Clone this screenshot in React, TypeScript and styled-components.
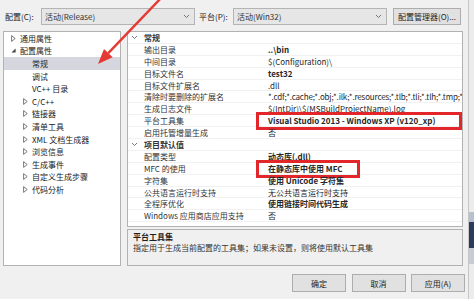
import React from "react";
import styled, { createGlobalStyle } from "styled-components";

const GlobalStyle = createGlobalStyle`
  html, body {
    margin: 0;
    padding: 0;
    background: #f0f0f0;
  }
  body {
    font-family: "Noto Sans CJK SC", "Noto Sans", sans-serif;
    font-size: 8px;
    color: #1e1e1e;
  }
`;

const Screen = styled.div`
  position: relative;
  width: 474px;
  height: 299px;
  display: flex;
  overflow: hidden;
  background: #f0f0f0;
`;

const Dialog = styled.div`
  width: 468px;
  border-right: 1px solid #c6c6c6;
  display: flex;
  flex-direction: column;
`;

const Backdrop = styled.div`
  flex: 1;
  display: flex;
  flex-direction: column;
  background: #ececec;
`;

const BackdropBand = styled.div<{ $h: number; $c: string }>`
  height: ${(p) => p.$h}px;
  background: ${(p) => p.$c};
`;

const TopBar = styled.div`
  height: 31px;
  box-sizing: border-box;
  padding: 8px 0 0 5px;
  display: flex;
  align-items: flex-start;
`;

const FieldLabel = styled.span<{ $w: number; $ml?: number }>`
  width: ${(p) => p.$w}px;
  margin-left: ${(p) => p.$ml || 0}px;
  line-height: 17px;
  white-space: nowrap;
  color: #222;
`;

const Combo = styled.div`
  width: 154px;
  height: 17px;
  box-sizing: border-box;
  border: 1px solid #b4b4b4;
  background: #e6e6e6;
  display: flex;
  align-items: center;
  justify-content: space-between;
  padding: 0 4px 0 3px;
  color: #333;
`;

const Button = styled.div<{ $w: number }>`
  width: ${(p) => p.$w}px;
  height: 17px;
  box-sizing: border-box;
  border: 1px solid #adadad;
  background: #e1e1e1;
  display: flex;
  align-items: center;
  justify-content: center;
  color: #222;
  white-space: nowrap;
`;

const ManagerButton = styled(Button)`
  margin-left: 6px;
`;

const Body = styled.div`
  height: 235px;
  display: flex;
  gap: 6px;
  padding-left: 3px;
`;

const Tree = styled.div`
  width: 118px;
  box-sizing: border-box;
  border: 1px solid #b2b2b2;
  background: #fff;
`;

const TreeRow = styled.div<{ $level: number; $selected?: boolean }>`
  height: 12.6px;
  display: flex;
  align-items: center;
  padding-left: ${(p) => p.$level * 12}px;
  background: ${(p) => (p.$selected ? "#d6d7de" : "transparent")};
  white-space: nowrap;
  color: #222;
`;

const Toggle = styled.span`
  width: 16px;
  height: 12px;
  display: flex;
  align-items: center;
  padding-left: 7px;
  box-sizing: border-box;
`;

const RightColumn = styled.div`
  width: 336px;
  display: flex;
  flex-direction: column;
  gap: 2px;
`;

const Grid = styled.div`
  height: 196px;
  box-sizing: border-box;
  border: 1px solid #b2b2b2;
  background: #fff;
  overflow: hidden;
`;

const GridRow = styled.div`
  height: 11.9px;
  display: grid;
  grid-template-columns: 12px 116px 1fr;
  box-sizing: border-box;
  border-bottom: 1px solid #f1f1f1;
  white-space: nowrap;
`;

const Margin = styled.span`
  display: flex;
  align-items: center;
  justify-content: center;
`;

const Cell = styled.span<{ $bold?: boolean }>`
  position: relative;
  line-height: 11px;
  font-weight: ${(p) => (p.$bold ? 700 : 400)};
  overflow: hidden;
  color: #1e1e1e;
`;

const NameCell = styled(Cell)`
  padding-left: 4px;
  color: #333;
`;

const ValueCell = styled(Cell)`
  padding-left: 12px;
  overflow: visible;
`;

const ValueText = styled.span<{ $tight?: boolean }>`
  display: block;
  letter-spacing: ${(p) => (p.$tight ? "-0.16px" : "0")};
  color: #262626;
`;

const Highlight = styled.span<{ $w: number }>`
  position: absolute;
  left: 0;
  top: -3px;
  width: ${(p) => p.$w}px;
  height: 18px;
  box-sizing: border-box;
  border: 3px solid #e3262a;
`;

const Description = styled.div`
  height: 37px;
  box-sizing: border-box;
  border: 1px solid #b2b2b2;
  background: #f0f0f0;
  padding: 1px 5px;
  line-height: 11px;
`;

const DescTitle = styled.div`
  font-weight: 700;
  color: #1e1e1e;
`;

const DescText = styled.div`
  color: #333;
`;

const Footer = styled.div`
  flex: 1;
  display: flex;
  justify-content: flex-end;
  align-items: flex-start;
  gap: 5.5px;
  padding: 8px 3px 0 0;
`;

const FooterButton = styled(Button)`
  height: 18px;
`;

const Arrow = styled.svg`
  position: absolute;
  left: 0;
  top: 0;
  pointer-events: none;
`;

const ComboChevron = () => (
  <svg width="7" height="5" viewBox="0 0 7 5">
    <polyline points="1,1 3.5,3.5 6,1" fill="none" stroke="#666" strokeWidth="0.9" />
  </svg>
);

const Collapsed = () => (
  <svg width="5" height="7" viewBox="0 0 5 7">
    <polygon points="0.6,0.6 4.2,3.5 0.6,6.4" fill="#fff" stroke="#6b6b6b" strokeWidth="0.9" />
  </svg>
);

const Expanded = () => (
  <svg width="5" height="5" viewBox="0 0 5 5">
    <polygon points="4.6,0.4 4.6,4.6 0.4,4.6" fill="#444" />
  </svg>
);

type TreeItem = { label: string; level: number; toggle?: "open" | "closed"; selected?: boolean };

const treeItems: TreeItem[] = [
  { label: "通用属性", level: 0, toggle: "closed" },
  { label: "配置属性", level: 0, toggle: "open" },
  { label: "常规", level: 1, selected: true },
  { label: "调试", level: 1 },
  { label: "VC++ 目录", level: 1 },
  { label: "C/C++", level: 1, toggle: "closed" },
  { label: "链接器", level: 1, toggle: "closed" },
  { label: "清单工具", level: 1, toggle: "closed" },
  { label: "XML 文档生成器", level: 1, toggle: "closed" },
  { label: "浏览信息", level: 1, toggle: "closed" },
  { label: "生成事件", level: 1, toggle: "closed" },
  { label: "自定义生成步骤", level: 1, toggle: "closed" },
  { label: "代码分析", level: 1, toggle: "closed" },
];

type Prop = { name: string; value: string; bold?: boolean; mark?: number; tight?: boolean };
type Section = { title: string; rows: Prop[] };

const sections: Section[] = [
  {
    title: "常规",
    rows: [
      { name: "输出目录", value: "..\\bin", bold: true },
      { name: "中间目录", value: "$(Configuration)\\" },
      { name: "目标文件名", value: "test32", bold: true },
      { name: "目标文件扩展名", value: ".dll" },
      { name: "清除时要删除的扩展名", value: "*.cdf;*.cache;*.obj;*.ilk;*.resources;*.tlb;*.tli;*.tlh;*.tmp;*", tight: true },
      { name: "生成日志文件", value: "$(IntDir)\\$(MSBuildProjectName).log" },
      { name: "平台工具集", value: "Visual Studio 2013 - Windows XP (v120_xp)", bold: true, mark: 206 },
      { name: "启用托管增量生成", value: "否" },
    ],
  },
  {
    title: "项目默认值",
    rows: [
      { name: "配置类型", value: "动态库(.dll)", bold: true },
      { name: "MFC 的使用", value: "在静态库中使用 MFC", bold: true, mark: 104 },
      { name: "字符集", value: "使用 Unicode 字符集", bold: true },
      { name: "公共语言运行时支持", value: "无公共语言运行时支持" },
      { name: "全程序优化", value: "使用链接时间代码生成", bold: true },
      { name: "Windows 应用商店应用支持", value: "否" },
    ],
  },
];

export default function App() {
  return (
    <Screen>
      <GlobalStyle />
      <Dialog>
        <TopBar>
          <FieldLabel $w={36}>配置(C):</FieldLabel>
          <Combo>
            活动(Release)
            <ComboChevron />
          </Combo>
          <FieldLabel $w={34} $ml={4}>平台(P):</FieldLabel>
          <Combo>
            活动(Win32)
            <ComboChevron />
          </Combo>
          <ManagerButton $w={68}>配置管理器(O)...</ManagerButton>
        </TopBar>

        <Body>
          <Tree>
            {treeItems.map((item) => (
              <TreeRow key={item.label} $level={item.level} $selected={item.selected}>
                <Toggle>
                  {item.toggle === "closed" && <Collapsed />}
                  {item.toggle === "open" && <Expanded />}
                </Toggle>
                {item.label}
              </TreeRow>
            ))}
          </Tree>

          <RightColumn>
            <Grid>
              {sections.map((section) => (
                <React.Fragment key={section.title}>
                  <GridRow>
                    <Margin>
                      <ComboChevron />
                    </Margin>
                    <NameCell $bold>{section.title}</NameCell>
                    <span />
                  </GridRow>
                  {section.rows.map((row) => (
                    <GridRow key={row.name}>
                      <Margin />
                      <NameCell>{row.name}</NameCell>
                      <ValueCell $bold={row.bold}>
                        <ValueText $tight={row.tight}>{row.value}</ValueText>
                        {row.mark && <Highlight $w={row.mark} />}
                      </ValueCell>
                    </GridRow>
                  ))}
                </React.Fragment>
              ))}
            </Grid>
            <Description>
              <DescTitle>平台工具集</DescTitle>
              <DescText>指定用于生成当前配置的工具集；如果未设置，则将使用默认工具集</DescText>
            </Description>
          </RightColumn>
        </Body>

        <Footer>
          <FooterButton $w={54}>确定</FooterButton>
          <FooterButton $w={54}>取消</FooterButton>
          <FooterButton $w={54}>应用(A)</FooterButton>
        </Footer>
      </Dialog>

      <Backdrop>
        <BackdropBand $h={212} $c="#ececec" />
        <BackdropBand $h={10} $c="#b9c0cd" />
        <BackdropBand $h={26} $c="#2c3b5a" />
        <BackdropBand $h={16} $c="#c6ccd8" />
      </Backdrop>

      <Arrow width="474" height="299" viewBox="0 0 474 299">
        <line x1="162" y1="-3" x2="108.3" y2="53.1" stroke="#e53a33" strokeWidth="2.4" />
        <polygon points="98,64 112.7,57.2 104,49" fill="#e53a33" />
      </Arrow>
    </Screen>
  );
}
